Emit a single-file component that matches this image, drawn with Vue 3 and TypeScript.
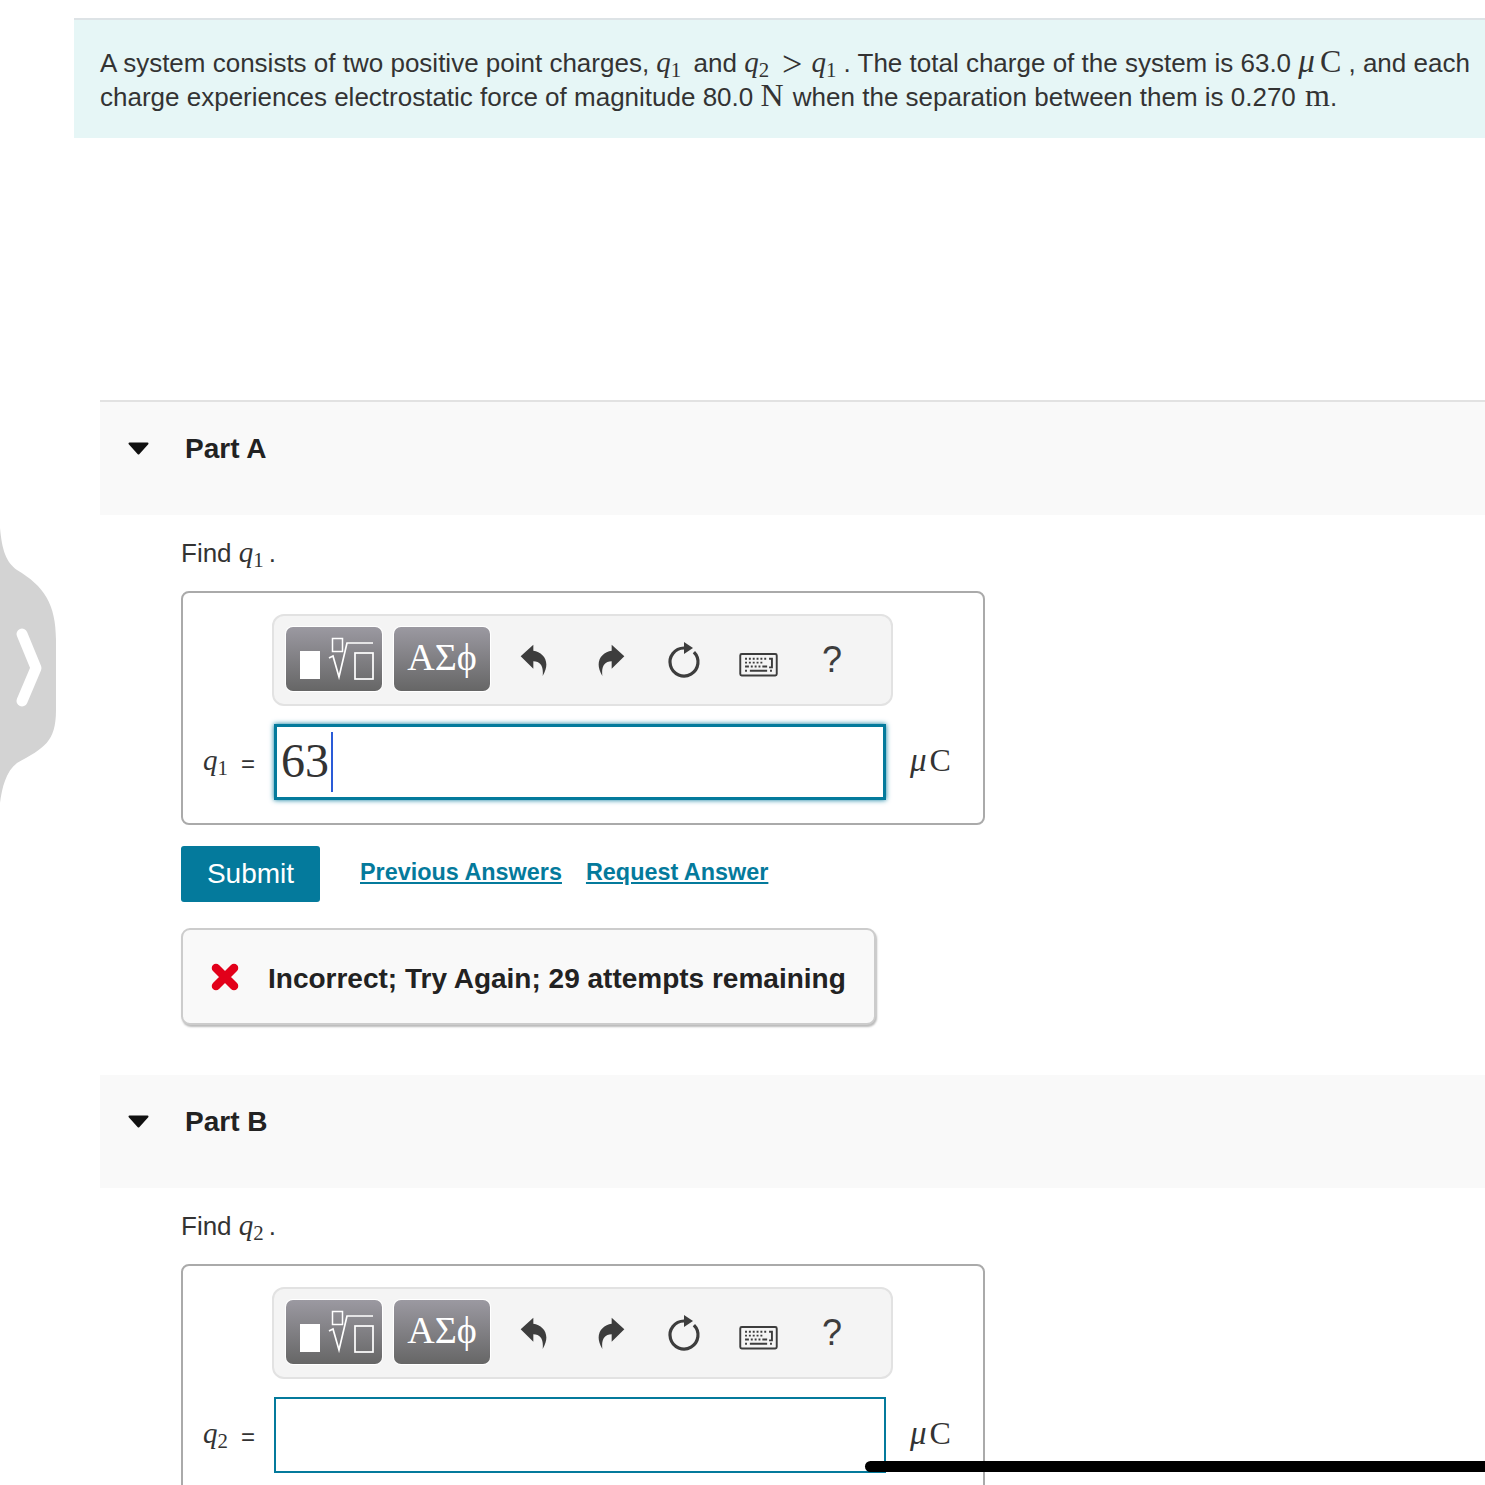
<script setup lang="ts">
// Partes del problema, cada una con su respuesta
interface Part {
  title: string
  sub: string
  value: string
  focused: boolean
  feedback: string
}

const parts: Part[] = [
  {
    title: 'Part A',
    sub: '1',
    value: '63',
    focused: true,
    feedback: 'Incorrect; Try Again; 29 attempts remaining'
  },
  { title: 'Part B', sub: '2', value: '', focused: false, feedback: '' }
]
</script>

<template>
  <div class="page">
    <!-- Enunciado -->
    <div class="intro">
      A system consists of two positive point charges,
      <span class="math after-q"><i>q</i><sub>1</sub></span> and
      <span class="math"><i>q</i><sub>2</sub><span class="op">&gt;</span><i>q</i><sub>1</sub></span> . The total charge of the system is 63.0
      <span class="math"><i class="mu wide">μ</i><span class="sym">C</span></span> , and each<br />
      charge experiences electrostatic force of magnitude 80.0
      <span class="math sym gap">N</span> when the separation between them is 0.270
      <span class="math sym metre">m</span><span class="sym-dot">.</span>
    </div>

    <div v-for="part in parts" :key="part.title" class="part" :class="{ first: part.focused }">
      <div class="part-header">
        <svg class="caret-down" viewBox="0 0 22 14" width="22" height="14">
          <path d="M1.500 1.500h18L10.500 11.500z" fill="#111" stroke="#111" stroke-width="2" stroke-linejoin="round" />
        </svg>
        <h2>{{ part.title }}</h2>
      </div>

      <div class="part-body">
        <p class="find">Find <span class="math"><i>q</i><sub>{{ part.sub }}</sub></span><span class="dot">.</span></p>

        <div class="answer-box">
          <div class="toolbar">
            <div class="tool-btn">
              <svg viewBox="0 0 96 64" width="96" height="64">
                <rect x="14" y="24" width="20" height="28" fill="#fff" />
                <rect x="46.500" y="11.500" width="10" height="13" fill="none" stroke="#fff" stroke-width="1.500" />
                <path d="M43 31l4-2 6 21 8-34h26" fill="none" stroke="#fff" stroke-width="1.700" />
                <rect x="69" y="26" width="18" height="26" fill="none" stroke="#fff" stroke-width="1.700" />
              </svg>
            </div>
            <div class="tool-btn greek">ΑΣϕ</div>
            <svg class="tool-icon undo" viewBox="60 125 90 105" width="30" height="35">
              <path d="M62 165L100 130V148C130 152 154 182 128 224C131 196 122 180 100 180V202Z" fill="#3d3d3d" />
            </svg>
            <svg class="tool-icon redo" viewBox="60 125 90 105" width="30" height="35">
              <path d="M148 165L110 130V148C80 152 56 182 82 224C79 196 88 180 110 180V202Z" fill="#3d3d3d" />
            </svg>
            <svg class="tool-icon reload" viewBox="0 0 36 40" width="36" height="40">
              <path d="M18 7A14 14 0 1 0 27.900 11.100" fill="none" stroke="#3d3d3d" stroke-width="3.200" />
              <path d="M18 1L27 7L18 13Z" fill="#3d3d3d" />
            </svg>
            <svg class="tool-icon keyboard" viewBox="0 0 40 25" width="39" height="24">
              <rect x="1" y="1" width="38" height="22.500" rx="1.500" fill="none" stroke="#3d3d3d" stroke-width="2" />
              <path d="M6 6h2M10 6h2M14 6h2M18 6h2M22 6h2M26 6h2M6 10h2M10 10h2M14 10h2M18 10h2M22 10h2M6 14h4M12 14h2M16 14h2M20 14h2M24 14h5M31 6h3v9h-3M6 18.500h2M11 18.500h18M32 18.500h2" stroke="#3d3d3d" stroke-width="2" fill="none" />
            </svg>
            <span class="help">?</span>
          </div>

          <label class="eq-label"><span class="math"><i>q</i><sub>{{ part.sub }}</sub></span><span class="eq">=</span></label>
          <div class="math-input" :class="{ focused: part.focused }">
            <span class="typed">{{ part.value }}</span><span v-if="part.focused" class="cursor"></span>
          </div>
          <span class="unit math"><i class="mu">μ</i><span class="sym">C</span></span>
        </div>

        <template v-if="part.focused">
          <div class="actions">
            <button class="submit">Submit</button>
            <a class="link first-link" href="#">Previous Answers</a>
            <a class="link" href="#">Request Answer</a>
          </div>

          <div class="feedback">
            <svg viewBox="0 0 28 28" width="28" height="28">
              <path d="M5 5L23 23M23 5L5 23" stroke="#e2001a" stroke-width="8.500" stroke-linecap="round" />
            </svg>
            <strong>{{ part.feedback }}</strong>
          </div>
        </template>
      </div>
    </div>

    <!-- Pestaña lateral -->
    <svg class="side-tab" viewBox="0 0 60 290" width="60" height="290">
      <path d="M0 8C2 30 6 42 17 50C44 66 56 84 56 120V190C56 222 44 228 17 243C6 251 2 268 0 283Z" fill="#d3d3d3" />
      <path d="M22 114L36 148L22 181" fill="none" stroke="#fff" stroke-width="11" stroke-linecap="round" stroke-linejoin="round" />
    </svg>

    <!-- Barra de desplazamiento -->
    <div class="scrollbar"></div>
  </div>
</template>

<style scoped>
.page {
  position: relative;
  width: 1485px;
  height: 1485px;
  overflow: hidden;
  padding-top: 18px;
  box-sizing: border-box;
  background: #fff;
  color: #333;
  font-family: "Liberation Sans", Arial, sans-serif;
  font-size: 26px;
}

.math {
  font-family: "Liberation Serif", "Times New Roman", serif;
  font-size: 29px;
  line-height: 0;
  white-space: nowrap;
}

.math i {
  font-style: italic;
}

.math sub {
  font-size: 0.72em;
  line-height: 0;
  vertical-align: -0.25em;
}

.mu {
  padding-right: 3px;
  font-size: 33px;
}

.mu.wide {
  padding-right: 5px;
}

.sym {
  font-size: 32px;
}

.gap {
  margin-right: 2px;
}

.metre {
  margin-left: 2px;
}

.after-q {
  margin-right: 5px;
}

.op {
  margin: 0 9px 0 13px;
  font-size: 36px;
  line-height: 0;
  vertical-align: -4px;
}

.dot {
  margin-left: 5px;
}

.intro {
  margin-left: 74px;
  height: 92px;
  padding: 26px 0 0 26px;
  border-top: 2px solid #dde3e6;
  background: #e6f6f6;
  line-height: 34px;
  white-space: nowrap;
}

.part {
  margin-left: 100px;
}

.part.first {
  margin-top: 262px;
  border-top: 2px solid #e2e2e2;
}

.part:not(.first) {
  margin-top: 50px;
}

.part-header {
  display: flex;
  align-items: center;
  height: 113px;
  background: #f9f9f9;
  padding-left: 28px;
}

.caret-down {
  margin-bottom: 20px;
}

.part-header h2 {
  margin: 0 0 20px 35px;
  font-size: 28px;
  font-weight: 700;
  color: #222;
}

.part-body {
  padding-left: 81px;
}

.find {
  margin: 22px 0;
  height: 32px;
  line-height: 32px;
}

.answer-box {
  display: grid;
  grid-template-columns: 91px 613px 1fr;
  grid-template-rows: 92px 76px;
  row-gap: 18px;
  width: 804px;
  height: 234px;
  padding-top: 21px;
  border: 2px solid #aaa;
  border-radius: 8px;
  box-sizing: border-box;
}

.toolbar {
  grid-column: 2;
  display: flex;
  align-items: center;
  width: 621px;
  margin-left: -2px;
  padding: 0 0 2px 12px;
  border: 2px solid #e2e2e2;
  border-radius: 12px;
  background: #f4f4f4;
  box-sizing: border-box;
}

.tool-btn {
  width: 96px;
  height: 64px;
  border-radius: 7px;
  background: linear-gradient(#9b99a1, #666);
  box-shadow: 0 0 0 1px #fff;
  margin-right: 12px;
}

.tool-btn svg {
  display: block;
}

.greek {
  padding-top: 6px;
  box-sizing: border-box;
  text-align: center;
  font-family: "Liberation Serif", serif;
  font-size: 38px;
  line-height: 48px;
  color: #fff;
}

.tool-icon {
  flex: none;
}

.undo {
  margin-left: 18px;
  margin-top: 2px;
}

.redo {
  margin-left: 45px;
  margin-top: 2px;
}

.reload {
  margin-left: 41px;
  margin-top: 4px;
}

.keyboard {
  margin-left: 37px;
  margin-top: 11px;
}

.help {
  margin-left: 44px;
  font-size: 36px;
  color: #3d3d3d;
  margin-top: 2px;
}

.eq-label {
  grid-column: 1;
  grid-row: 2;
  display: flex;
  align-items: center;
  padding: 4px 0 0 20px;
  color: #333;
}

.eq {
  margin-left: 13px;
  font-size: 24px;
}

.math-input {
  grid-column: 2;
  grid-row: 2;
  display: flex;
  align-items: center;
  width: 612px;
  padding-left: 4px;
  border: 2px solid #047a9c;
  background: #fff;
  box-sizing: border-box;
}

.math-input.focused {
  border-width: 3px;
  box-shadow: 0 0 5px #047a9c;
}

.typed {
  margin-top: -3px;
  font-family: "Liberation Serif", serif;
  font-size: 48px;
  color: #333;
}

.cursor {
  width: 2px;
  height: 60px;
  margin-left: 2px;
  background: #2a5bd7;
}

.unit {
  grid-column: 3;
  grid-row: 2;
  align-self: center;
  margin-left: 23px;
  margin-top: -5px;
  line-height: 36px;
  font-size: 32px;
}

.actions {
  display: flex;
  align-items: center;
  margin-top: 21px;
}

.submit {
  width: 139px;
  height: 56px;
  border: 0;
  border-radius: 3px;
  background: #047a9c;
  color: #fff;
  font-family: inherit;
  font-size: 28px;
}

.link {
  margin-left: 24px;
  margin-bottom: 4px;
  color: #047a9c;
  font-size: 23.400px;
  font-weight: 700;
}

.first-link {
  margin-left: 40px;
}

.feedback {
  display: flex;
  align-items: center;
  gap: 29px;
  width: 695px;
  height: 97px;
  margin-top: 26px;
  padding-left: 28px;
  border: 2px solid #ccc;
  border-radius: 9px;
  background: #f9f9f9;
  box-shadow: 1px 2px 2px #bbb;
  box-sizing: border-box;
}

.feedback strong {
  padding-top: 4px;
  font-size: 28px;
  color: #222;
}

.side-tab {
  position: absolute;
  left: 0;
  top: 520px;
}

.scrollbar {
  position: absolute;
  left: 865px;
  right: 0;
  top: 1461px;
  height: 11px;
  border-radius: 6px 0 0 6px;
  background: #000;
}
</style>
